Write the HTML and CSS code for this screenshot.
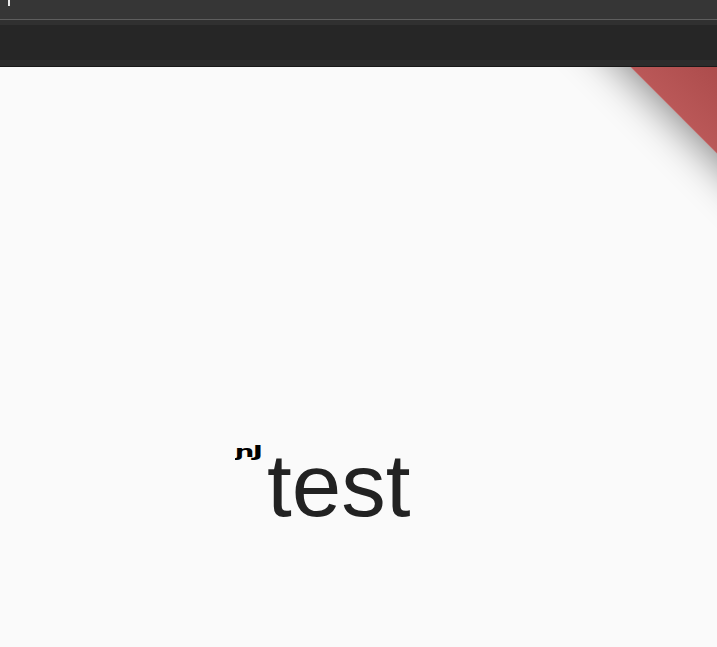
FILE: index.html
```html
<!DOCTYPE html>
<html>
<head>
<meta charset="utf-8">
<link rel="stylesheet" href="styles.css">
</head>
<body>
<div class="app">
  <div class="titlebar"><span class="cursor"></span></div>
  <div class="titleline"></div>
  <div class="band"></div>
  <div class="toolbar"></div>
  <div class="toolbar-foot"></div>
  <div class="toolbar-edge"></div>
  <div class="content">
    <div class="row">
      <div class="clip"><span class="glyph">ɲJ</span></div>
      <span class="word">test</span>
    </div>
    <div class="banner"></div>
  </div>
</div>
</body>
</html>
```
FILE: styles.css
```css
html, body {
  margin: 0;
  padding: 0;
  background: #fafafa;
}
.app {
  width: 717px;
  height: 647px;
  display: flex;
  flex-direction: column;
  overflow: hidden;
}
.titlebar {
  height: 19px;
  background: #363636;
  padding-left: 8px;
  box-sizing: border-box;
}
.cursor {
  display: block;
  width: 2px;
  height: 6px;
  background: #e8e8e8;
}
.titleline {
  height: 1px;
  background: #5e5e5e;
}
.band {
  height: 5px;
  background: #303030;
}
.toolbar {
  height: 35px;
  background: #262626;
}
.toolbar-foot {
  height: 6px;
  background: #2c2c2c;
}
.toolbar-edge {
  height: 1px;
  background: #1a1a1a;
}
.content {
  flex: 1;
  position: relative;
  overflow: hidden;
  background: #fafafa;
  padding: 374px 0 0 235px;
  box-sizing: border-box;
}
.row {
  display: flex;
  align-items: flex-start;
}
.clip {
  width: 32px;
  height: 20px;
  overflow: hidden;
  display: flex;
  justify-content: flex-end;
}
.glyph {
  display: inline-block;
  font-family: "DejaVu Sans", sans-serif;
  font-weight: bold;
  font-size: 19px;
  line-height: 20px;
  color: #000;
  letter-spacing: -1px;
  margin-right: 5px;
  white-space: nowrap;
  transform: scale(1.45, 0.85);
  transform-origin: right center;
}
.word {
  font-family: "Liberation Sans", Arial, sans-serif;
  font-size: 89px;
  line-height: 89px;
  margin-top: 0;
  color: #222222;
}
.banner {
  position: absolute;
  left: 571px;
  top: -101px;
  width: 400px;
  height: 200px;
  transform: rotate(45deg);
  background: linear-gradient(to top, #ba5858, #a84848 40%);
  box-shadow: 0 6px 40px rgba(0, 0, 0, 0.45);
}
```
